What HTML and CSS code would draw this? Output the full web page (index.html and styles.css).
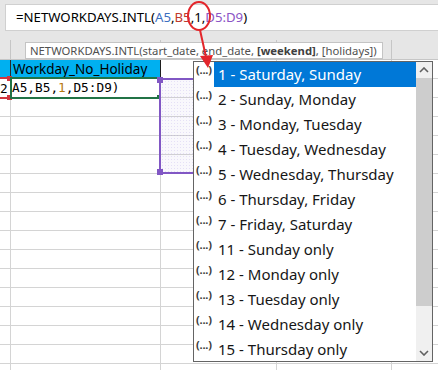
FILE: index.html
```html
<!DOCTYPE html>
<html lang="en">
<head>
    <meta charset="UTF-8">
    <title>NETWORKDAYS.INTL</title>
    <link rel="stylesheet" href="styles.css">
</head>
<body>
    <div class="top">
        <div class="formula">=NETWORKDAYS.INTL(<span class="ref-a">A5</span>,<span class="ref-b">B5</span>,1,<span class="ref-d">D5:D9</span>)</div>
    </div>
    <div class="colheads"></div>

    <div class="sheet">
        <div class="head-a"></div>
        <div class="head-b">Workday_No_Holiday</div>
        <div class="head-c"></div>
        <div class="ref-cell">2</div>
        <div class="edit-cell">A5,B5,<span class="num">1</span>,D5:D9)</div>
        <div class="range"></div>
    </div>

    <div class="tip">NETWORKDAYS.INTL(start_date, end_date, <b>[weekend]</b>, [holidays])</div>

    <div class="list">
        <ul class="items">
            <li class="item"><span class="ico">(...)</span><span class="txt active">1 - Saturday, Sunday</span></li>
            <li class="item"><span class="ico">(...)</span><span class="txt">2 - Sunday, Monday</span></li>
            <li class="item"><span class="ico">(...)</span><span class="txt">3 - Monday, Tuesday</span></li>
            <li class="item"><span class="ico">(...)</span><span class="txt">4 - Tuesday, Wednesday</span></li>
            <li class="item"><span class="ico">(...)</span><span class="txt">5 - Wednesday, Thursday</span></li>
            <li class="item"><span class="ico">(...)</span><span class="txt">6 - Thursday, Friday</span></li>
            <li class="item"><span class="ico">(...)</span><span class="txt">7 - Friday, Saturday</span></li>
            <li class="item"><span class="ico">(...)</span><span class="txt">11 - Sunday only</span></li>
            <li class="item"><span class="ico">(...)</span><span class="txt">12 - Monday only</span></li>
            <li class="item"><span class="ico">(...)</span><span class="txt">13 - Tuesday only</span></li>
            <li class="item"><span class="ico">(...)</span><span class="txt">14 - Wednesday only</span></li>
            <li class="item"><span class="ico">(...)</span><span class="txt">15 - Thursday only</span></li>
        </ul>
        <div class="scroll">
            <div class="arrow">
                <svg width="10" height="6" viewBox="0 0 10 6"><polyline points="1,5 5,1 9,5" fill="none" stroke="#606060" stroke-width="1.6"/></svg>
            </div>
            <div class="thumb"></div>
            <div class="track"></div>
            <div class="arrow">
                <svg width="10" height="6" viewBox="0 0 10 6"><polyline points="1,1 5,5 9,1" fill="none" stroke="#606060" stroke-width="1.6"/></svg>
            </div>
        </div>
    </div>

    <!-- red callout drawn over the screenshot -->
    <svg class="mark" width="438" height="370" viewBox="0 0 438 370">
        <ellipse cx="199" cy="16" rx="11" ry="14" fill="none" stroke="#e3262b" stroke-width="2"/>
        <line x1="200" y1="30" x2="206" y2="57" stroke="#e3262b" stroke-width="2"/>
        <polygon points="200,56 213,55 208,68" fill="#e3262b"/>
    </svg>
</body>
</html>
```

FILE: styles.css
```css
* {
    box-sizing: border-box;
}
body {
    margin: 0;
    width: 438px;
    height: 370px;
    overflow: hidden;
    position: relative;
    background: #e6e6e6;
    font-family: "Noto Sans", sans-serif;
    color: #000;
}
.top {
    height: 40px;
    padding: 4px 0 0 5px;
}
.formula {
    height: 27px;
    background: #fff;
    border: 1px solid #d0d0d0;
    border-right: 0;
    padding-left: 10px;
    line-height: 25px;
    font-size: 13.2px;
    white-space: nowrap;
}
.ref-a {
    color: #3b6fbf;
}
.ref-b {
    color: #c0392b;
}
.ref-d {
    color: #8b55c6;
}
.colheads {
    height: 20px;
    border-bottom: 1px solid #c6c6c6;
    background: linear-gradient(90deg, transparent 10px, #c6c6c6 10px 11px, transparent 11px 160px, #c6c6c6 160px 161px, transparent 161px 276px, #c6c6c6 276px 277px, transparent 277px 391px, #c6c6c6 391px 392px, transparent 392px);
}
.sheet {
    height: 310px;
    display: grid;
    grid-template-columns: 11px 150px 116px 115px 1fr;
    grid-template-rows: repeat(16, 19px);
    background-color: #fff;
    background-image:
        repeating-linear-gradient(180deg, transparent 0 18px, #d4d4d4 18px 19px),
        linear-gradient(90deg, transparent 10px, #d4d4d4 10px 11px, transparent 11px 160px, #d4d4d4 160px 161px, transparent 161px 276px, #d4d4d4 276px 277px, transparent 277px 391px, #d4d4d4 391px 392px, transparent 392px);
}
.head-a {
    grid-column: 1;
    grid-row: 1;
    background: #00b0f0;
    border-right: 1px solid #2b2b2b;
}
.head-b {
    grid-column: 2;
    grid-row: 1;
    background: #00b0f0;
    border-right: 1px solid #1e1e1e;
    padding-left: 2px;
    font-size: 13.5px;
    line-height: 18px;
    white-space: nowrap;
}
.head-c {
    grid-column: 3;
    grid-row: 1;
}
.ref-cell {
    grid-column: 1;
    grid-row: 2;
    margin: -2px 0 -1px 0;
    border-top: 2px solid #d0353f;
    border-bottom: 2px solid #d0353f;
    position: relative;
    font-family: "DejaVu Sans Mono", monospace;
    font-size: 12.75px;
    line-height: 19px;
}
.ref-cell::before,
.ref-cell::after {
    content: "";
    position: absolute;
    right: -1px;
    width: 5px;
    height: 5px;
    background: #d0353f;
}
.ref-cell::before {
    top: -3px;
}
.ref-cell::after {
    bottom: -3px;
}
.edit-cell {
    grid-column: 2;
    grid-row: 2;
    margin: -2px 0 -1px -1px;
    border: 2px solid #217346;
    padding-left: 0;
    font-family: "DejaVu Sans Mono", monospace;
    font-size: 12.75px;
    line-height: 18px;
    white-space: nowrap;
    overflow: hidden;
    position: relative;
    z-index: 1;
}
.edit-cell::after {
    content: "";
    position: absolute;
    right: -3px;
    bottom: -3px;
    width: 5px;
    height: 5px;
    background: #217346;
}
.num {
    color: #b7770e;
}
.range {
    grid-column: 3 / 5;
    grid-row: 2 / 7;
    margin: -1px 0 0 -2px;
    border: 2px solid #8157c4;
    background-color: rgba(150, 130, 210, 0.06);
    background-image: radial-gradient(rgba(150, 130, 220, 0.2) 0.6px, transparent 0.9px);
    background-size: 3px 3px;
    position: relative;
    z-index: 2;
}
.range::before,
.range::after {
    content: "";
    position: absolute;
    left: -4px;
    width: 6px;
    height: 6px;
    background: #8157c4;
}
.range::before {
    top: -3px;
}
.range::after {
    bottom: -3px;
}
.tip {
    position: absolute;
    left: 25px;
    top: 42px;
    width: 358px;
    height: 17px;
    background: #fff;
    border: 1px solid #c4c4c4;
    padding-left: 4px;
    font-size: 11.3px;
    line-height: 15px;
    color: #505050;
    white-space: nowrap;
    z-index: 5;
}
.tip b {
    color: #404040;
}
.list {
    position: absolute;
    left: 193px;
    top: 61px;
    width: 240px;
    height: 301px;
    background: #fff;
    border: 1px solid #646464;
    display: flex;
    z-index: 5;
}
.items {
    list-style: none;
    margin: 0;
    padding: 0;
    flex: 1;
}
.item {
    height: 25px;
    display: flex;
}
.ico {
    width: 20px;
    padding: 2px 0 0 2px;
    font-size: 11px;
    font-weight: bold;
    line-height: 12px;
    letter-spacing: -0.2px;
    color: #3a3a3a;
    white-space: nowrap;
    overflow: hidden;
}
.txt {
    flex: 1;
    padding-left: 4px;
    font-size: 15px;
    line-height: 24px;
    color: #161616;
    white-space: nowrap;
}
.txt.active {
    background: #0078d7;
    color: #fff;
}
.scroll {
    width: 16px;
    display: flex;
    flex-direction: column;
    background: #f0f0f0;
}
.arrow {
    height: 16px;
    display: flex;
    align-items: center;
    justify-content: center;
}
.thumb {
    height: 228px;
    background: #cdcdcd;
}
.track {
    flex: 1;
}
.mark {
    position: absolute;
    left: 0;
    top: 0;
    z-index: 10;
}
```
